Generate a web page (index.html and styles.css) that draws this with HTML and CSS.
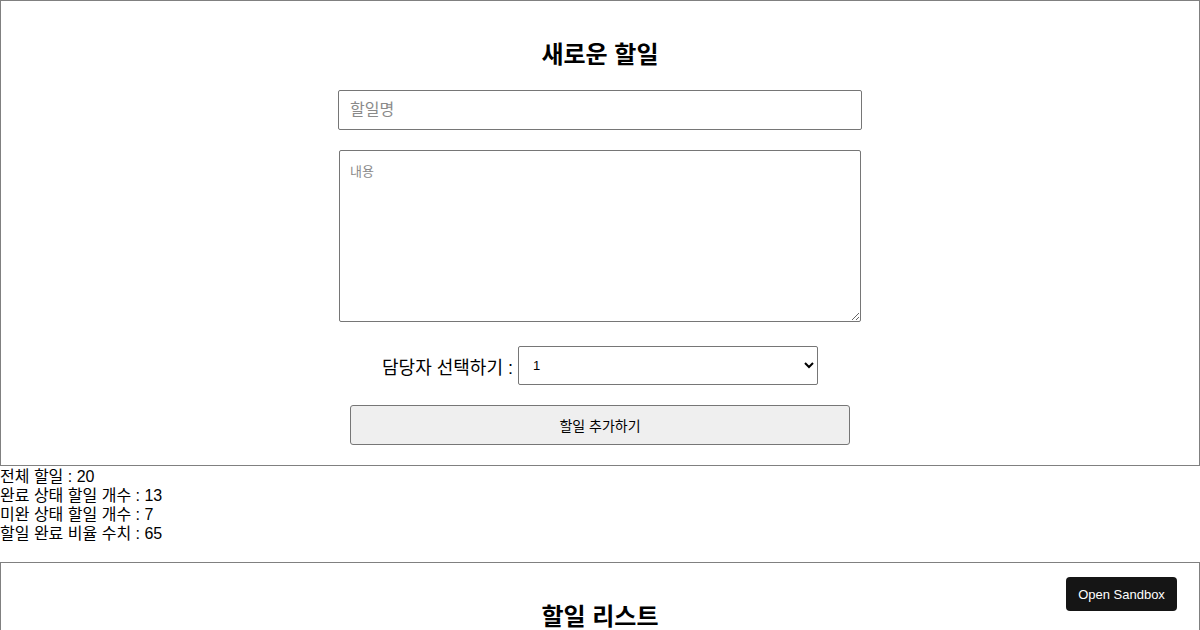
FILE: index.html
```html
<!DOCTYPE html>
<html lang="ko">
<head>
<meta charset="utf-8">
<title>할일</title>
<link rel="stylesheet" href="styles.css">
</head>
<body>
<section class="panel">
  <h2 class="panel-title">새로운 할일</h2>
  <form class="todo-form">
    <input class="field-input" type="text" placeholder="할일명">
    <textarea class="field-area" placeholder="내용"></textarea>
    <div class="select-row">
      <label class="select-label">담당자 선택하기 :</label>
      <select class="field-select">
        <option>1</option>
        <option>2</option>
        <option>3</option>
      </select>
    </div>
    <button type="button" class="submit-btn">할일 추가하기</button>
  </form>
</section>
<div class="stats">
  <div class="stat">전체 할일 : 20</div>
  <div class="stat">완료 상태 할일 개수 : 13</div>
  <div class="stat">미완 상태 할일 개수 : 7</div>
  <div class="stat">할일 완료 비율 수치 : 65</div>
</div>
<section class="panel">
  <h2 class="panel-title">할일 리스트</h2>
</section>
<a class="sandbox-btn" href="#">Open Sandbox</a>
</body>
</html>
```
FILE: styles.css
```css
html, body {
  margin: 0;
  padding: 0;
  background: #fff;
  color: #000;
  font-family: "Liberation Sans", Arial, "Noto Sans CJK KR", sans-serif;
  overflow: hidden;
}
.panel {
  border: 1px solid #808080;
  padding: 0 0 20px;
}
.panel-title {
  margin: 40px 0 21px;
  font-size: 24px;
  line-height: 28px;
  font-weight: bold;
  text-align: center;
}
.todo-form {
  display: flex;
  flex-direction: column;
  align-items: center;
}
.field-input {
  box-sizing: border-box;
  width: 524px;
  height: 40px;
  margin: 0 0 20px;
  padding: 0 11px;
  border: 1px solid #767676;
  border-radius: 2px;
  font-family: inherit;
  font-size: 16px;
}
.field-input::placeholder,
.field-area::placeholder {
  color: #8a8a8a;
}
.field-area {
  box-sizing: border-box;
  width: 522px;
  height: 172px;
  margin: 0 0 24px;
  padding: 10px;
  border: 1px solid #767676;
  border-radius: 2px;
  font-family: "Liberation Sans", "Noto Sans CJK KR", sans-serif;
  font-size: 13px;
  resize: both;
}
.select-row {
  display: flex;
  align-items: center;
  gap: 5px;
  margin: 0 0 20px;
}
.select-label {
  font-size: 18px;
}
.field-select {
  box-sizing: border-box;
  width: 300px;
  height: 39px;
  padding: 0 10px;
  border: 1px solid #767676;
  border-radius: 2px;
  background: #fff;
  font-family: inherit;
  font-size: 13px;
}
.submit-btn {
  box-sizing: border-box;
  width: 500px;
  height: 40px;
  border: 1px solid #767676;
  border-radius: 3px;
  background: #efefef;
  font-family: inherit;
  font-size: 14px;
  color: #000;
}
.stats {
  padding: 1px 0 0;
  margin-bottom: 19px;
  font-size: 16px;
  line-height: 19px;
}
.sandbox-btn {
  position: fixed;
  right: 23px;
  bottom: 19px;
  width: 111px;
  height: 34px;
  display: flex;
  align-items: center;
  justify-content: center;
  background: #151515;
  color: #fff;
  border-radius: 4px;
  font-size: 13px;
  text-decoration: none;
  font-family: "Liberation Sans", Arial, sans-serif;
}
```
